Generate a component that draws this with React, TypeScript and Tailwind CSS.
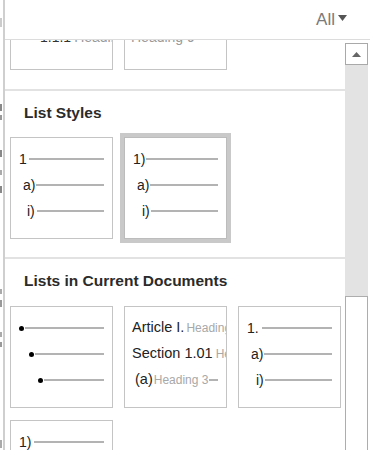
import React from "react";

// thin grey rule used as the "list line" in every preview tile
function Rule({ className = "" }: { className?: string }) {
  return <div className={"h-[2px] flex-1 bg-[#b3b3b3] " + className} />;
}

function Dot() {
  return <span className="h-[5px] w-[5px] shrink-0 rounded-full bg-black" />;
}

function Tile({ children, selected = false }: { children: React.ReactNode; selected?: boolean }) {
  return (
    <div
      className={
        "h-[102px] w-[103px] shrink-0 overflow-hidden bg-white pt-[8px] " +
        (selected
          ? "border border-[#bcbcbc] outline-[4px] outline-solid outline-[#c9c9c9]"
          : "border border-[#c4c4c4]")
      }
    >
      {children}
    </div>
  );
}

function Row({ children, className = "" }: { children: React.ReactNode; className?: string }) {
  return <div className={"flex h-[26px] items-center pr-[8px] " + className}>{children}</div>;
}

function Section({ title, children }: { title: string; children: React.ReactNode }) {
  return (
    <div className="border-t-2 border-[#e2e2e2] pb-[18px] pt-[12px]">
      <h2 className="pl-[19px] text-[15.5px] font-bold leading-[20px] text-[#2b2b2b]">{title}</h2>
      {children}
    </div>
  );
}

export default function App() {
  return (
    <div
      className="flex h-[450px] w-[370px] overflow-hidden bg-white text-[#333]"
      style={{ fontFamily: '"Liberation Sans", Arial, sans-serif' }}
    >
      {/* bits of the document peeking out behind the pane */}
      <svg width="3" height="450" className="shrink-0">
        <rect x="0" y="18" width="2" height="9" fill="#ccc" />
        <rect x="0" y="104" width="2" height="7" fill="#888" />
        <rect x="0" y="115" width="2" height="5" fill="#999" />
        <rect x="0" y="150" width="2" height="7" fill="#888" />
        <rect x="0" y="170" width="2" height="5" fill="#aaa" />
        <rect x="0" y="186" width="2" height="7" fill="#888" />
        <rect x="0" y="289" width="2" height="5" fill="#aaa" />
        <rect x="0" y="300" width="2" height="7" fill="#999" />
        <rect x="0" y="332" width="2" height="5" fill="#aaa" />
        <rect x="0" y="342" width="2" height="5" fill="#999" />
        <rect x="0" y="440" width="2" height="8" fill="#aaa" />
      </svg>

      <div className="flex min-w-0 flex-1 flex-col border-l-2 border-[#cfcfcf]">
        <div className="flex h-[40px] shrink-0 items-center justify-end border-b border-[#dcdcdc] pr-[23px]">
          <span className="text-[17px] leading-none text-[#7a7a7a]">All</span>
          <svg width="9" height="6" viewBox="0 0 9 6" className="ml-[3px] mt-[-3px]">
            <path d="M0 0 H9 L4.5 6 Z" fill="#555" />
          </svg>
        </div>

        <div className="flex min-h-0 flex-1">
          <div className="min-w-0 flex-1 overflow-hidden">
            {/* tail of the previous (scrolled) section */}
            <div className="mt-[-72px] flex gap-[11px] pb-[19px] pl-[5px]">
              <Tile>
                <div className="h-[47px]" />
                <Row className="pl-[29px] text-[14px] whitespace-nowrap">
                  <span>1.1.1</span>
                  <span className="ml-[3px] text-[#9a9a9a]">Heading 3</span>
                </Row>
              </Tile>
              <Tile>
                <div className="h-[47px]" />
                <Row className="pl-[6px] text-[14px] whitespace-nowrap">
                  <span className="text-[#9a9a9a]">Heading 9</span>
                </Row>
              </Tile>
            </div>

            <Section title="List Styles">
              <div className="mt-[14px] flex gap-[11px] pl-[5px] text-[14px] text-[#222]">
                <Tile>
                  <Row className="pl-[8px]">
                    <span>1</span>
                    <Rule className="ml-[2px]" />
                  </Row>
                  <Row className="pl-[12px]">
                    <span>a)</span>
                    <Rule className="ml-[1px]" />
                  </Row>
                  <Row className="pl-[16px]">
                    <span>i)</span>
                    <Rule className="ml-[2px]" />
                  </Row>
                </Tile>
                <Tile selected>
                  <Row className="pl-[8px]">
                    <span>1)</span>
                    <Rule className="ml-[1px]" />
                  </Row>
                  <Row className="pl-[12px]">
                    <span>a)</span>
                    <Rule className="ml-[1px]" />
                  </Row>
                  <Row className="pl-[17px]">
                    <span>i)</span>
                    <Rule className="ml-[1px]" />
                  </Row>
                </Tile>
              </div>
            </Section>

            <Section title="Lists in Current Documents">
              <div className="mt-[15px] flex flex-wrap gap-x-[11px] gap-y-[12px] pl-[5px] text-[14px] text-[#222]">
                <Tile>
                  <Row className="pl-[8px]">
                    <Dot />
                    <Rule className="ml-[1px]" />
                  </Row>
                  <Row className="pl-[18px]">
                    <Dot />
                    <Rule className="ml-[1px]" />
                  </Row>
                  <Row className="pl-[27px]">
                    <Dot />
                    <Rule className="ml-[1px]" />
                  </Row>
                </Tile>
                <Tile>
                  <Row className="pl-[7px] pr-[6px] text-[14.5px] whitespace-nowrap">
                    <span>Article I.</span>
                    <span className="ml-[2px] text-[12px] text-[#a8a8a8]">Heading 1</span>
                  </Row>
                  <Row className="pl-[7px] pr-[6px] text-[14.5px] whitespace-nowrap">
                    <span>Section 1.01</span>
                    <span className="ml-[3px] text-[12px] text-[#a8a8a8]">Heading 2</span>
                  </Row>
                  <Row className="pl-[10px] pr-[6px] text-[14.5px] whitespace-nowrap">
                    <span>(a)</span>
                    <span className="ml-[1px] text-[12px] text-[#a8a8a8]">Heading 3</span>
                    <Rule className="ml-[1px]" />
                  </Row>
                </Tile>
                <Tile>
                  <Row className="pl-[8px]">
                    <span>1.</span>
                    <Rule className="ml-[3px]" />
                  </Row>
                  <Row className="pl-[12px]">
                    <span>a)</span>
                    <Rule className="ml-[1px]" />
                  </Row>
                  <Row className="pl-[17px]">
                    <span>i)</span>
                    <Rule className="ml-[1px]" />
                  </Row>
                </Tile>
                <Tile>
                  <Row className="pl-[8px]">
                    <span>1)</span>
                    <Rule className="ml-[3px]" />
                  </Row>
                </Tile>
              </div>
            </Section>
          </div>

          {/* scrollbar */}
          <div className="mr-[2px] flex w-[23px] shrink-0 flex-col pt-[3px]">
            <div className="flex h-[22px] items-center justify-center border border-[#a9a9a9] bg-white">
              <svg width="9" height="5" viewBox="0 0 9 5">
                <path d="M0 5 L4.5 0 L9 5 Z" fill="#666" />
              </svg>
            </div>
            <div className="h-[231px] bg-[#e3e3e3]" />
            <div className="flex-1 border border-b-0 border-[#adadad] bg-white" />
          </div>
        </div>
      </div>
    </div>
  );
}
